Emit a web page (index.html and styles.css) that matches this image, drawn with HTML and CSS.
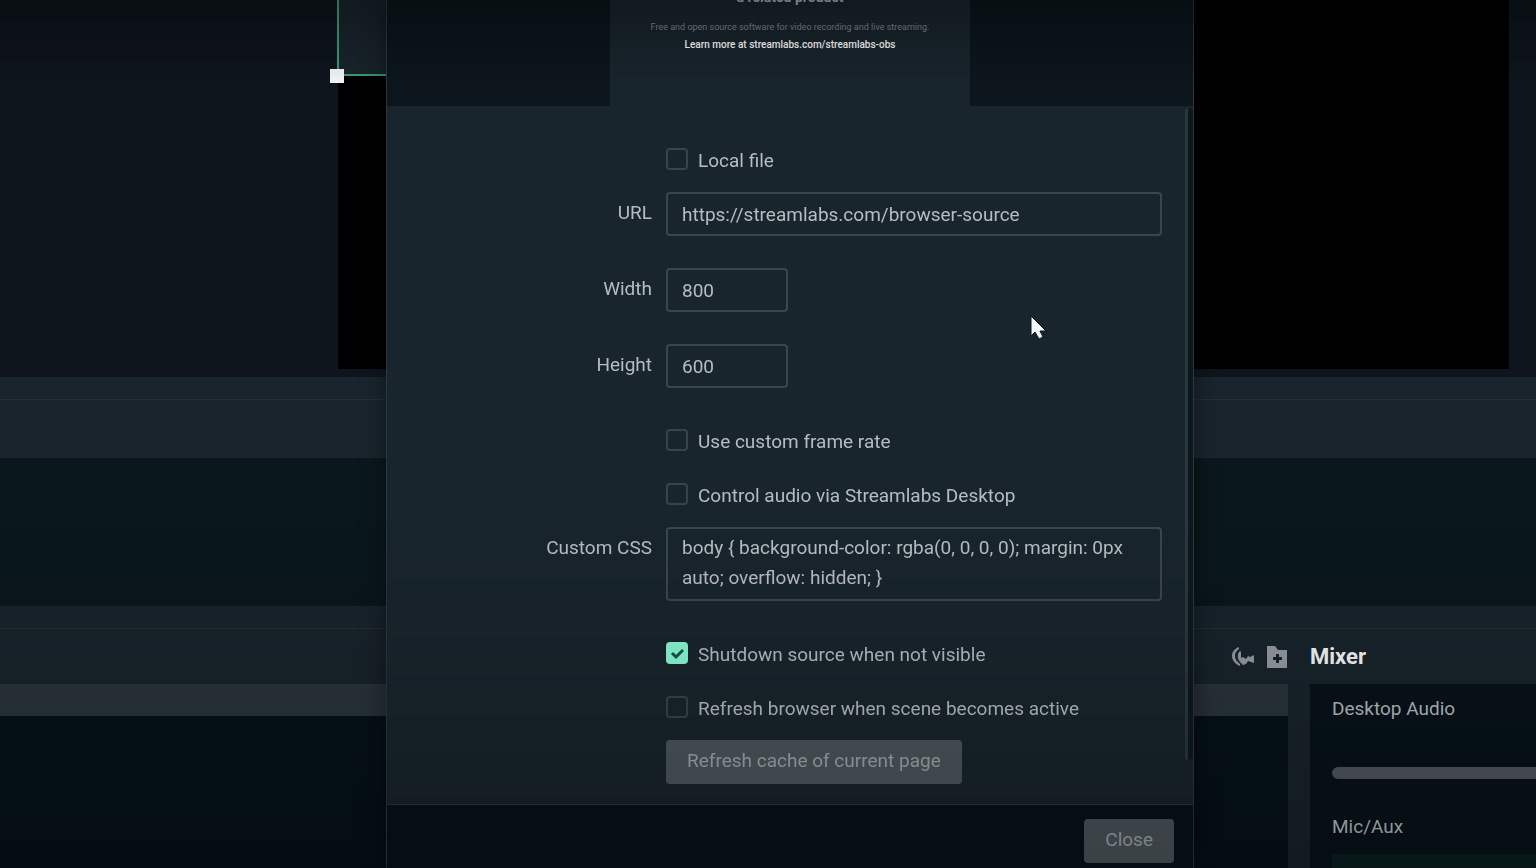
FILE: index.html
```html
<!DOCTYPE html>
<html lang="en">
<head>
<meta charset="utf-8">
<title>Browser source settings</title>
<link rel="stylesheet" href="styles.css">
</head>
<body>
<main class="app">
  <section class="editor">
    <div class="display"><div class="selection"><span class="handle"></span></div></div>
  </section>
  <section class="strip"><div class="strip-head"></div><div class="strip-body"></div></section>
  <section class="docks">
    <div class="dock scenes"><div class="dock-head"></div><div class="list"><div class="row"></div></div></div>
    <div class="dock sources">
      <div class="dock-head">
        <button class="icon-btn" aria-label="Toggle source audio"><svg width="22" height="20" viewBox="0 0 22 20"><path d="M7 0C2 2 0 5 0 9c0 4 3 8 8 10V17C5 15 3 12 3 9c0-3 1-5 4-7z"/><path d="M8 4C5 6 5 12 8 15l3 3 3-1 2-3 6 2V8l-4 2-2-1-2 3-3-2-2 1V5z"/></svg></button>
        <button class="icon-btn" aria-label="Add group"><svg width="22" height="22" viewBox="0 0 22 22"><path fill-rule="evenodd" d="M1 0h8l3 4h9v18H1zM10 8v3H7v3h3v3h3v-3h3v-3h-3V8z"/></svg></button>
      </div>
      <div class="list"><div class="row"></div></div>
    </div>
    <div class="dock mixer">
      <div class="dock-head"><h2>Mixer</h2></div>
      <div class="channels">
        <label class="channel" for="desktop">Desktop Audio</label>
        <input id="desktop" class="volume" type="range" value="100">
        <p class="channel">Mic/Aux</p>
        <div class="meter"></div>
      </div>
    </div>
  </section>
</main>

<div class="overlay">
  <section class="dialog" role="dialog" aria-label="Browser source settings">
    <div class="preview">
      <div class="source">
        <p class="source-title">a related product</p>
        <p class="source-text">Free and open source software for video recording and live streaming.</p>
        <a class="source-link" href="#">Learn more at streamlabs.com/streamlabs-obs</a>
      </div>
    </div>
    <form class="form">
      <label class="check last"><input type="checkbox"><span>Local file</span></label>
      <label class="name" for="url">URL</label>
      <input class="field" id="url" type="text" value="https://streamlabs.com/browser-source">
      <label class="name" for="w">Width</label>
      <input class="field small" id="w" type="text" value="800">
      <label class="name" for="h">Height</label>
      <input class="field small group-end" id="h" type="text" value="600">
      <label class="check"><input type="checkbox"><span>Use custom frame rate</span></label>
      <label class="check last"><input type="checkbox"><span>Control audio via Streamlabs Desktop</span></label>
      <label class="name" for="css">Custom CSS</label>
      <textarea class="field area group-end" id="css" rows="2">body { background-color: rgba(0, 0, 0, 0); margin: 0px auto; overflow: hidden; }</textarea>
      <label class="check"><input type="checkbox" checked><span>Shutdown source when not visible</span></label>
      <label class="check last"><input type="checkbox"><span>Refresh browser when scene becomes active</span></label>
      <button class="btn refresh" type="button">Refresh cache of current page</button>
      <div class="scrollbar"></div>
    </form>
    <footer class="foot"><button class="btn" type="button">Close</button></footer>
  </section>
</div>
<svg class="cursor" width="16" height="26" viewBox="0 0 16 26"><path d="M1 1v20l4-4 4 7 4-2-3-6h6z" fill="#f4f8f9" stroke="#0c1418"/></svg>
<div class="shade"></div>
</body>
</html>
```
FILE: styles.css
```css
* { box-sizing: border-box; }
body {
  margin: 0;
  background: #19242c;
  color: #b6bdc1;
  font: 400 19px/30px Roboto, sans-serif;
  overflow: hidden;
}
p, h2 { margin: 0; }
input, textarea, button { font: inherit; color: inherit; }

.app { display: flex; flex-direction: column; height: 100vh; }
.editor {
  flex: 1;
  display: flex;
  padding: 0 27px 8px 22%;
  background: #0e151c;
}
.display { flex: 1; position: relative; background: #000; }
.selection {
  position: absolute;
  top: 0;
  left: -1px;
  width: 30%;
  height: 76px;
  background: #19252c;
  border: solid #3c9c76;
  border-width: 0 0 2px 2px;
}
.handle {
  position: absolute;
  left: -9px;
  bottom: -9px;
  width: 14px;
  height: 14px;
  background: #f4f7f7;
}
.strip { padding: 22px 0; }
.strip-head { height: 59px; border-top: 1px solid #233038; }
.strip-body { height: 148px; background: #0a171c; }
.docks {
  display: flex;
  gap: 22px;
  height: 240px;
  border-top: 1px solid #233038;
}
.dock { display: flex; flex-direction: column; }
.scenes, .sources { flex: 1; }
.mixer { width: 226px; overflow: hidden; }
.dock-head {
  display: flex;
  flex: none;
  justify-content: flex-end;
  align-items: center;
  gap: 12px;
  height: 55px;
}
.mixer .dock-head { justify-content: flex-start; }
.dock-head h2 { font-size: 22px; font-weight: 700; color: #f8fafa; }
.icon-btn { display: flex; padding: 0; border: 0; background: none; }
.icon-btn svg { fill: #959c9f; }
.list, .channels { flex: 1; background: #07131a; }
.list { background: #06121a; }
.row { height: 32px; background: #2b353c; }
.channels { padding: 10px 0 0 22px; }
.channel { display: block; }
.volume {
  appearance: none;
  display: block;
  width: 300px;
  height: 12px;
  margin: 43px 0 33px;
  border-radius: 6px;
  background: #51575f;
}
.volume::-webkit-slider-thumb { appearance: none; width: 24px; height: 24px; }
.meter { height: 16px; margin-top: 12px; background: #0a1f20; }

.overlay {
  position: fixed;
  inset: 0;
  display: flex;
  justify-content: center;
  padding-left: 44px;
}
.dialog {
  display: flex;
  flex-direction: column;
  width: 808px;
  max-width: 100%;
  background: #19252d;
  border: solid #2b373e;
  border-width: 0 1px;
  box-shadow: 0 0 24px rgba(0, 0, 0, 0.4);
}
.preview {
  display: flex;
  justify-content: center;
  height: 106px;
  background: #0c161c;
  overflow: hidden;
}
.source {
  width: 360px;
  margin-top: -12px;
  background: #19252d;
  text-align: center;
  font-size: 9px;
  line-height: 18px;
  white-space: nowrap;
}
.source-title { font-size: 14px; font-weight: 700; color: #aab0b3; }
.source-text { margin: 12px 0 0; color: #7b848a; }
.source-link { display: block; color: #fff; font-size: 10px; font-weight: 500; text-decoration: none; }

.form {
  position: relative;
  flex: 1;
  display: grid;
  grid-template-columns: 265px 1fr;
  column-gap: 14px;
  align-content: start;
  padding: 38px 31px 0 0;
}
.check {
  grid-column: 2;
  display: flex;
  align-items: center;
  gap: 10px;
  height: 30px;
  margin-bottom: 24px;
}
.check.last { margin-bottom: 18px; }
.check span { padding-top: 3px; }
.check input {
  appearance: none;
  width: 22px;
  height: 22px;
  margin: 0;
  border: 2px solid #37444b;
  border-radius: 4px;
}
.check input:checked {
  border-color: #88fcd6;
  background: #88fcd6 url("data:image/svg+xml,%3Csvg xmlns='http://www.w3.org/2000/svg' viewBox='0 0 18 18'%3E%3Cpath d='M4 9l4 4 7-7' fill='none' stroke='%23175448' stroke-width='3'/%3E%3C/svg%3E") center / 18px;
}
.name { padding-top: 6px; text-align: right; }
.field {
  width: 100%;
  height: 44px;
  margin: 0 0 32px;
  padding: 0 14px;
  background: transparent;
  border: 2px solid #3a464d;
  border-radius: 4px;
  outline: 0;
}
.field.small { width: 122px; }
.field.area {
  height: 74px;
  padding: 4px 14px;
  resize: none;
  overflow: hidden;
}
.field.group-end { margin-bottom: 37px; }
.btn {
  height: 44px;
  padding: 0 21px 2px;
  border: 0;
  border-radius: 4px;
  background: #4c565c;
  color: #9fa7aa;
}
.refresh { grid-column: 2; justify-self: start; }
.scrollbar {
  position: absolute;
  top: 2px;
  right: 0;
  bottom: 44px;
  width: 8px;
  background: #0d181e;
  border: solid #2a373f;
  border-width: 0 0 0 3px;
  border-radius: 4px;
}
.foot {
  display: flex;
  justify-content: flex-end;
  height: 64px;
  padding: 14px 19px 0;
  background: #081219;
  border-top: 1px solid #2b373e;
}
.cursor { position: fixed; left: 1030px; top: 315px; }
.shade {
  position: fixed;
  inset: 0;
  pointer-events: none;
  background: linear-gradient(rgba(0, 0, 0, 0.3), rgba(0, 0, 0, 0) 10%, rgba(0, 0, 0, 0) 60%, rgba(0, 0, 0, 0.24));
}
```
